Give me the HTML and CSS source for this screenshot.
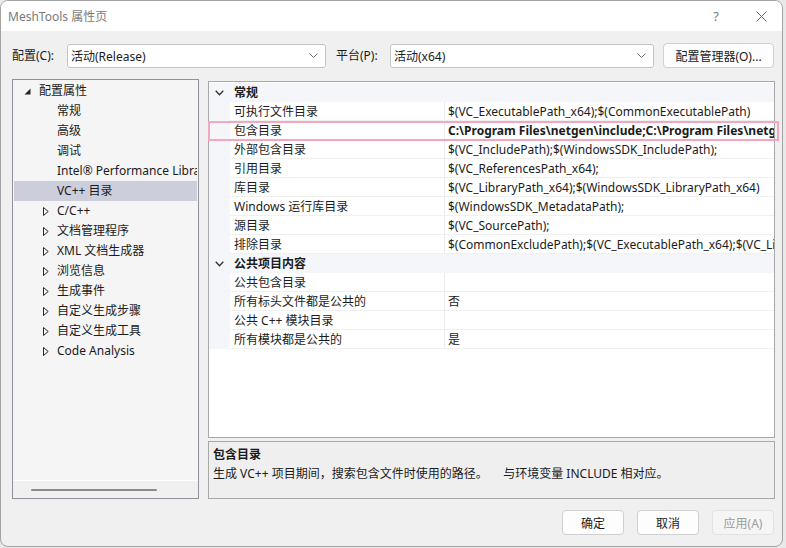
FILE: index.html
```html
<!DOCTYPE html>
<html lang="zh-CN">
<head>
    <meta charset="UTF-8">
    <title>MeshTools 属性页</title>
    <link rel="stylesheet" href="styles.css">
</head>
<body>
<div class="window">
    <!-- title bar -->
    <div class="titlebar">
        <span class="title">MeshTools 属性页</span>
        <span class="help">?</span>
        <svg class="close" width="11" height="11" viewBox="0 0 11 11"><path d="M0.5 0.5L10.5 10.5M10.5 0.5L0.5 10.5" stroke="#6a6a6a" stroke-width="1" fill="none"/></svg>
    </div>

    <!-- configuration / platform -->
    <div class="toolbar">
        <label class="tb-label lbl-config">配置(C):</label>
        <div class="combo combo-config">
            <span>活动(Release)</span>
            <svg width="9" height="5" viewBox="0 0 9 5"><path d="M0.5 0.5L4.5 4.5L8.5 0.5" stroke="#707070" fill="none"/></svg>
        </div>
        <label class="tb-label lbl-platform">平台(P):</label>
        <div class="combo combo-platform">
            <span>活动(x64)</span>
            <svg width="9" height="5" viewBox="0 0 9 5"><path d="M0.5 0.5L4.5 4.5L8.5 0.5" stroke="#707070" fill="none"/></svg>
        </div>
        <button class="btn btn-manager">配置管理器(O)...</button>
    </div>

    <div class="main">
        <!-- left tree -->
        <div class="tree">
            <ul class="tree-list">
                <li class="node root"><svg class="exp" width="7" height="7" viewBox="0 0 7 7"><path d="M6.5 0.5V6.5H0.5Z" fill="#262626"/></svg>配置属性</li>
                <li class="node leaf">常规</li>
                <li class="node leaf">高级</li>
                <li class="node leaf">调试</li>
                <li class="node leaf">Intel® Performance Libraries</li>
                <li class="node leaf selected">VC++ 目录</li>
                <li class="node child"><svg class="col" width="6" height="9" viewBox="0 0 6 9"><path d="M0.5 0.5L5.2 4.5L0.5 8.5Z" stroke="#262626" fill="none"/></svg>C/C++</li>
                <li class="node child"><svg class="col" width="6" height="9" viewBox="0 0 6 9"><path d="M0.5 0.5L5.2 4.5L0.5 8.5Z" stroke="#262626" fill="none"/></svg>文档管理程序</li>
                <li class="node child"><svg class="col" width="6" height="9" viewBox="0 0 6 9"><path d="M0.5 0.5L5.2 4.5L0.5 8.5Z" stroke="#262626" fill="none"/></svg>XML 文档生成器</li>
                <li class="node child"><svg class="col" width="6" height="9" viewBox="0 0 6 9"><path d="M0.5 0.5L5.2 4.5L0.5 8.5Z" stroke="#262626" fill="none"/></svg>浏览信息</li>
                <li class="node child"><svg class="col" width="6" height="9" viewBox="0 0 6 9"><path d="M0.5 0.5L5.2 4.5L0.5 8.5Z" stroke="#262626" fill="none"/></svg>生成事件</li>
                <li class="node child"><svg class="col" width="6" height="9" viewBox="0 0 6 9"><path d="M0.5 0.5L5.2 4.5L0.5 8.5Z" stroke="#262626" fill="none"/></svg>自定义生成步骤</li>
                <li class="node child"><svg class="col" width="6" height="9" viewBox="0 0 6 9"><path d="M0.5 0.5L5.2 4.5L0.5 8.5Z" stroke="#262626" fill="none"/></svg>自定义生成工具</li>
                <li class="node child"><svg class="col" width="6" height="9" viewBox="0 0 6 9"><path d="M0.5 0.5L5.2 4.5L0.5 8.5Z" stroke="#262626" fill="none"/></svg>Code Analysis</li>
            </ul>
            <div class="hscroll"><div class="thumb"></div></div>
        </div>

        <div class="right">
            <!-- property grid -->
            <div class="grid">
                <div class="row category">
                    <div class="gutter"><svg width="9" height="6" viewBox="0 0 9 6"><path d="M0.7 0.7L4.5 4.7L8.3 0.7" stroke="#333" stroke-width="1.3" fill="none"/></svg></div>
                    <div class="cat-name">常规</div>
                </div>
                <div class="row"><div class="gutter"></div><div class="name">可执行文件目录</div><div class="value">$(VC_ExecutablePath_x64);$(CommonExecutablePath)</div></div>
                <div class="row"><div class="gutter"></div><div class="name">包含目录</div><div class="value bold">C:\Program Files\netgen\include;C:\Program Files\netgen\include\include;$(IncludePath)</div></div>
                <div class="row"><div class="gutter"></div><div class="name">外部包含目录</div><div class="value">$(VC_IncludePath);$(WindowsSDK_IncludePath);</div></div>
                <div class="row"><div class="gutter"></div><div class="name">引用目录</div><div class="value">$(VC_ReferencesPath_x64);</div></div>
                <div class="row"><div class="gutter"></div><div class="name">库目录</div><div class="value">$(VC_LibraryPath_x64);$(WindowsSDK_LibraryPath_x64)</div></div>
                <div class="row"><div class="gutter"></div><div class="name">Windows 运行库目录</div><div class="value">$(WindowsSDK_MetadataPath);</div></div>
                <div class="row"><div class="gutter"></div><div class="name">源目录</div><div class="value">$(VC_SourcePath);</div></div>
                <div class="row"><div class="gutter"></div><div class="name">排除目录</div><div class="value">$(CommonExcludePath);$(VC_ExecutablePath_x64);$(VC_LibraryPath_x64)</div></div>
                <div class="row category">
                    <div class="gutter"><svg width="9" height="6" viewBox="0 0 9 6"><path d="M0.7 0.7L4.5 4.7L8.3 0.7" stroke="#333" stroke-width="1.3" fill="none"/></svg></div>
                    <div class="cat-name">公共项目内容</div>
                </div>
                <div class="row"><div class="gutter"></div><div class="name">公共包含目录</div><div class="value"></div></div>
                <div class="row"><div class="gutter"></div><div class="name">所有标头文件都是公共的</div><div class="value">否</div></div>
                <div class="row"><div class="gutter"></div><div class="name">公共 C++ 模块目录</div><div class="value"></div></div>
                <div class="row"><div class="gutter"></div><div class="name">所有模块都是公共的</div><div class="value">是</div></div>
            </div>

            <!-- description -->
            <div class="desc">
                <div class="desc-title">包含目录</div>
                <div class="desc-text">生成 VC++ 项目期间，搜索包含文件时使用的路径。&nbsp;&nbsp;&nbsp;&nbsp;&nbsp;与环境变量 INCLUDE 相对应。</div>
            </div>
        </div>
    </div>

    <div class="footer">
        <button class="btn btn-footer">确定</button>
        <button class="btn btn-footer">取消</button>
        <button class="btn btn-footer disabled">应用(A)</button>
    </div>

    <!-- highlight frame drawn over the selected row -->
    <div class="mark"></div>
</div>
</body>
</html>
```

FILE: styles.css
```css
body {
    margin: 0;
    background: #e9e9e9;
    font-family: "Noto Sans", "Noto Sans CJK SC", sans-serif;
    font-size: 12px;
    color: #1b1b1b;
}
.window {
    position: relative;
    width: 781px;
    height: 545px;
    border: 1px solid #a3a3a3;
    border-radius: 8px;
    background: #f0f0f0;
    overflow: hidden;
}
.titlebar {
    height: 30px;
    background: #ffffff;
    display: flex;
    align-items: center;
    padding-left: 7px;
}
.title {
    color: #7a7a7a;
    font-size: 12px;
    flex: 1;
}
.help {
    color: #7a7a7a;
    font-size: 13px;
    margin-right: 37px;
}
.close {
    margin-right: 15px;
}
.toolbar {
    margin-top: 12px;
    height: 25px;
    display: flex;
    align-items: center;
    padding-left: 11px;
}
.tb-label {
    line-height: 24px;
}
.lbl-config {
    width: 55px;
}
.lbl-platform {
    width: 54px;
    margin-left: 10px;
}
.combo {
    box-sizing: border-box;
    height: 24px;
    background: #ffffff;
    border: 1px solid #c4c4c4;
    border-radius: 3px;
    display: flex;
    align-items: center;
    justify-content: space-between;
    padding: 0 7px 0 3px;
}
.combo-config {
    width: 259px;
}
.combo-platform {
    width: 264px;
}
.btn {
    font-family: "Noto Sans", "Noto Sans CJK SC", sans-serif;
    font-size: 12px;
    color: #1b1b1b;
    background: #fdfdfd;
    border: 1px solid #d0d0d0;
    border-radius: 4px;
    padding: 0;
    box-sizing: border-box;
}
.btn-manager {
    width: 111px;
    height: 25px;
    margin-left: 9px;
}
.main {
    margin-top: 11px;
    padding-left: 11px;
    display: flex;
    gap: 9px;
    height: 420px;
}
.tree {
    box-sizing: border-box;
    width: 187px;
    height: 420px;
    border: 1px solid #8f909a;
    background: #f5f5f5;
    display: flex;
    flex-direction: column;
}
.tree-list {
    list-style: none;
    margin: 0;
    padding: 1px 1px 0 1px;
    flex: 1;
    overflow: hidden;
}
.node {
    height: 20px;
    line-height: 20px;
    white-space: nowrap;
    overflow: hidden;
    display: flex;
    align-items: center;
}
.root {
    padding-left: 10px;
}
.root .exp {
    margin-right: 8px;
}
.leaf {
    padding-left: 43px;
}
.child {
    padding-left: 29px;
}
.child .col {
    margin-right: 8px;
}
.selected {
    background: #cccedb;
}
.hscroll {
    height: 17px;
    border-top: 1px solid #ffffff;
    background: #f0f0f0;
    position: relative;
}
.thumb {
    position: absolute;
    left: 18px;
    top: 8px;
    width: 126px;
    height: 2px;
    border-radius: 1px;
    background: #8a8a8a;
}
.right {
    width: 567px;
    display: flex;
    flex-direction: column;
}
.grid {
    box-sizing: border-box;
    margin-top: 2px;
    height: 358px;
    padding-top: 1px;
    border: 1px solid #a8a8a8;
    background: #ffffff;
    overflow: hidden;
}
.row {
    display: grid;
    grid-template-columns: 21px 215px 1fr;
    height: 19px;
    line-height: 20px;
}
.row .gutter {
    background: #f5f6f9;
    display: flex;
    align-items: center;
    justify-content: center;
    padding-right: 1px;
}
.row .name {
    padding-left: 4px;
    border-right: 1px solid #ececec;
    border-bottom: 1px solid #f0f0f0;
    white-space: nowrap;
    overflow: hidden;
}
.row .value {
    padding-left: 3px;
    border-bottom: 1px solid #f0f0f0;
    white-space: nowrap;
    overflow: hidden;
}
.row .bold {
    font-weight: bold;
}
.category {
    background: #f5f6f9;
}
.cat-name {
    grid-column: 2 / 4;
    padding-left: 4px;
    font-weight: bold;
}
.desc {
    box-sizing: border-box;
    margin-top: 3px;
    height: 58px;
    border: 1px solid #a8a8a8;
    background: #efefef;
    padding: 3px 4px;
    line-height: 19px;
}
.desc-title {
    font-weight: bold;
}
.footer {
    margin-top: 11px;
    display: flex;
    justify-content: flex-end;
    gap: 13px;
    padding-right: 8px;
}
.btn-footer {
    width: 62px;
    height: 25px;
}
.btn-footer.disabled {
    color: #9d9d9d;
    background: #f5f5f5;
    border-color: #e2e2e2;
}
.mark {
    position: absolute;
    left: 207px;
    top: 120px;
    width: 571px;
    height: 20px;
    box-sizing: border-box;
    border: 2px solid #f7a6c0;
}
```
